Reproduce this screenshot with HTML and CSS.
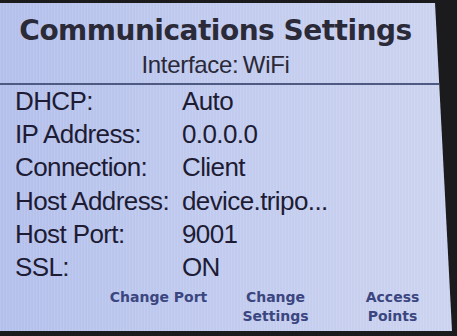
FILE: index.html
```html
<!DOCTYPE html>
<html lang="en">
<head>
    <title>Communications Settings</title>
    <link rel="stylesheet" href="styles.css">
</head>
<body>
    <div class="screen">
        <div class="header">
            <p class="title">Communications Settings</p>
            <p class="subtitle">Interface: WiFi</p>
        </div>

        <div class="rows">
            <span class="label">DHCP:</span><span class="value">Auto</span>
            <span class="label">IP Address:</span><span class="value">0.0.0.0</span>
            <span class="label">Connection:</span><span class="value">Client</span>
            <span class="label">Host Address:</span><span class="value">device.tripo...</span>
            <span class="label">Host Port:</span><span class="value">9001</span>
            <span class="label">SSL:</span><span class="value">ON</span>
        </div>

        <div class="soft_keys">
            <div class="key">Change Port</div>
            <div class="key">Change<br>Settings</div>
            <div class="key">Access<br>Points</div>
        </div>
    </div>
</body>
</html>
```

FILE: styles.css
```css
body{
    margin:0;
    background-color:#1b1a1c;
    width:457px;
    height:336px;
    overflow:hidden;
}

.screen{
    margin-top:3px;
    height:328px;
    background:
        repeating-linear-gradient(90deg, rgba(255,255,255,0.05) 0px, rgba(255,255,255,0.05) 1px, rgba(0,0,0,0.03) 2px, rgba(0,0,0,0) 3px),
        linear-gradient(90deg, #b6c2ee 0%, #c3cdf1 45%, #cfd6f2 100%);
    clip-path:polygon(0 0, 435px 0, 452px 100%, 0 100%);
    color:#1d1c34;
}

p{
    margin:0;
}

.header{
    padding-top:12px;
    padding-right:26px;
    text-align:center;
    border-bottom:2px solid #4f5a82;
    padding-bottom:5px;
}

.title{
    font-family:"DejaVu Sans", sans-serif;
    font-weight:bold;
    font-size:28px;
    line-height:32px;
    letter-spacing:-0.5px;
    color:#2b2a38;
}

.subtitle{
    margin-top:5px;
    font-family:"Liberation Sans", Arial, sans-serif;
    font-size:24px;
    line-height:26px;
    letter-spacing:-0.3px;
    word-spacing:-2px;
    color:#2a2938;
}

.rows{
    display:grid;
    grid-template-columns:167px auto;
    padding-left:15px;
    font-family:"Liberation Sans", Arial, sans-serif;
    font-size:26px;
    line-height:33.2px;
    letter-spacing:-0.6px;
}

.soft_keys{
    display:grid;
    grid-template-columns:117px 117px 117px;
    margin-left:100px;
    margin-top:4px;
    font-family:"DejaVu Sans", sans-serif;
    font-weight:bold;
    font-size:14px;
    line-height:19px;
    color:#3b4680;
    text-align:center;
}
```
